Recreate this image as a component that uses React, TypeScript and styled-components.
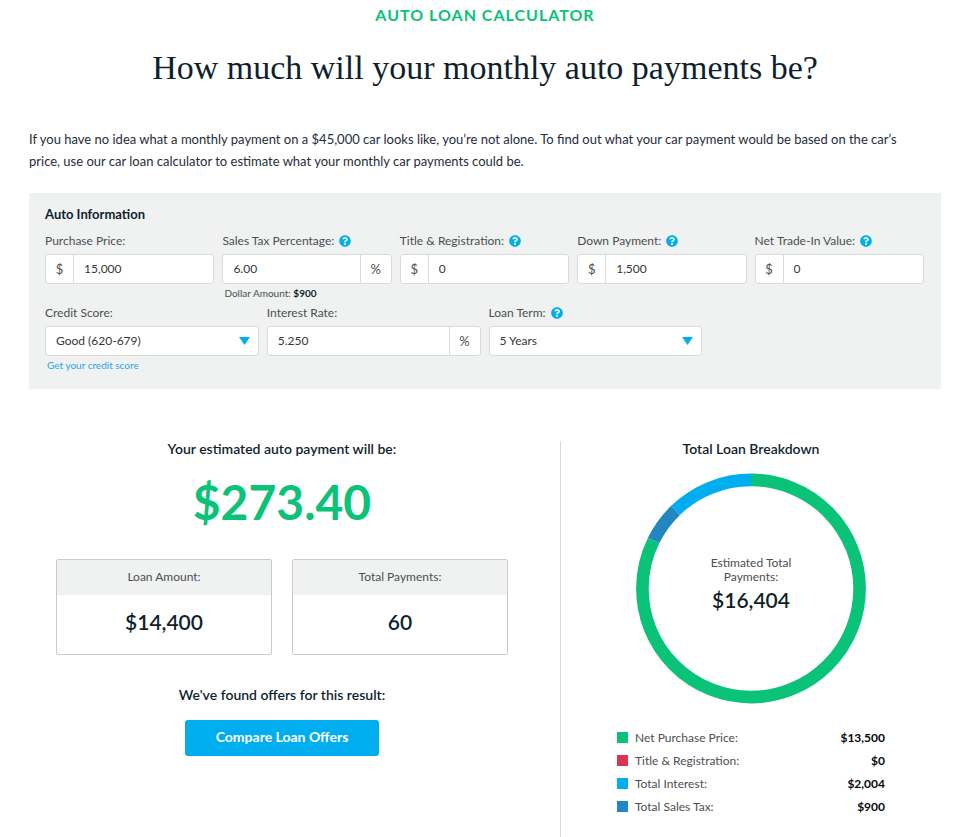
import React, { useId, useState } from "react";
import styled, { createGlobalStyle } from "styled-components";
import { FaQuestionCircle } from "react-icons/fa";

const GREEN = "#0ac278";
const BLUE = "#00aeef";
const STEEL = "#2087c0";
const RED = "#db3553";
const INK = "#0f1f2d";
const TEXT = "#4c4e50";
const LINE = "#d9dbdb";
const PANEL = "#f0f2f2";

const GlobalStyle = createGlobalStyle`
  *, *::before, *::after { box-sizing: border-box; }
  body {
    margin: 0;
    background: #fff;
    color: ${TEXT};
    font-family: Lato, "Open Sans", sans-serif;
    font-size: 12px;
    line-height: 16px;
  }
  h1, h2, h3, p, dl, dd, dt { margin: 0; }
  input, select, button { font-family: inherit; }
`;

const Page = styled.main`
  display: flex;
  flex-direction: column;
  min-height: 100vh;
  padding: 4px 30px 0 29px;
`;

const Eyebrow = styled.p`
  color: ${GREEN};
  font-size: 16px;
  font-weight: 700;
  line-height: 22px;
  letter-spacing: 1px;
  text-align: center;
  text-transform: uppercase;
`;

const Title = styled.h1`
  margin-top: 20px;
  color: ${INK};
  font-family: Georgia, "Liberation Serif", serif;
  font-size: 34px;
  font-weight: 400;
  line-height: 44px;
  text-align: center;
`;

const Intro = styled.p`
  margin-top: 38px;
  padding-right: 24px;
  color: #1f2d3a;
  font-size: 13px;
  line-height: 22px;
`;

const Panel = styled.form`
  margin-top: 21px;
  padding: 12px 17px 17px 16px;
  background: ${PANEL};
`;

const PanelTitle = styled.h2`
  margin-bottom: 5px;
  color: ${INK};
  font-size: 13px;
  font-weight: 700;
  line-height: 18px;
`;

const FieldRow = styled.div<{ $columns: number }>`
  display: grid;
  grid-template-columns: repeat(${(p) => p.$columns}, minmax(0, 1fr));
  gap: 8px;
`;

const FieldBlock = styled.div`
  display: flex;
  flex-direction: column;
  min-height: 72px;
  padding-top: 4px;
`;

const LabelLine = styled.div`
  display: flex;
  align-items: center;
  gap: 5px;
  height: 22px;
  padding-bottom: 5px;
  white-space: nowrap;
`;

const HelpButton = styled.button`
  display: flex;
  padding: 0;
  border: 0;
  background: none;
  color: ${BLUE};
  font-size: 12px;
  cursor: pointer;
`;

const InputGroup = styled.div`
  display: flex;
  height: 30px;
  overflow: hidden;
  border: 1px solid ${LINE};
  border-radius: 3px;
  background: #fff;
`;

const Affix = styled.span<{ $end?: boolean }>`
  flex: none;
  width: ${(p) => (p.$end ? 31 : 28)}px;
  border: 0 solid ${LINE};
  border-width: ${(p) => (p.$end ? "0 0 0 1px" : "0 1px 0 0")};
  font-size: 13px;
  line-height: 28px;
  text-align: center;
`;

const TextInput = styled.input`
  flex: 1;
  min-width: 0;
  padding: 0 10px 2px;
  border: 0;
  background: transparent;
  color: #333638;
  font-size: 12px;
`;

const SelectInput = styled.select`
  flex: 1;
  min-width: 0;
  padding: 0 30px 2px 10px;
  border: 0;
  appearance: none;
  background: transparent;
  color: #333638;
  font-size: 12px;
`;

const SelectWrap = styled(InputGroup)`
  display: grid;
  grid-template-columns: minmax(0, 1fr);
  & > * { grid-area: 1 / 1; }
`;

const Arrow = styled.svg`
  align-self: center;
  justify-self: end;
  margin-right: 8px;
  pointer-events: none;
`;

const Note = styled.p`
  padding: 2px 2px 0;
  font-size: 10px;
  line-height: 14px;
  strong { color: ${INK}; }
`;

const NoteLink = styled.a`
  padding: 2px 2px 0;
  color: #2ea3e6;
  font-size: 10px;
  line-height: 14px;
  text-decoration: none;
`;

const Results = styled.section`
  display: grid;
  grid-template-columns: minmax(0, 1fr) 381px;
  flex: 1;
  margin-top: 52px;
`;

const Estimate = styled.div`
  display: flex;
  flex-direction: column;
  align-items: center;
  padding: 0 52px 0 27px;
`;

const Subhead = styled.h2`
  color: ${INK};
  font-size: 14px;
  font-weight: 600;
  line-height: 16px;
  text-align: center;
`;

const Payment = styled.p`
  margin: 14px 0 27px;
  color: ${GREEN};
  font-size: 48px;
  font-weight: 700;
  line-height: 61px;
`;

const Cards = styled.div`
  display: grid;
  grid-template-columns: 1fr 1fr;
  gap: 20px;
  width: 100%;
  margin-bottom: 32px;
`;

const Card = styled.div`
  border: 1px solid #c9cbcb;
  border-radius: 2px;
  text-align: center;
`;

const CardLabel = styled.h3`
  padding-bottom: 2px;
  background: ${PANEL};
  font-size: 12px;
  font-weight: 400;
  line-height: 33px;
`;

const CardValue = styled.p`
  color: ${INK};
  font-size: 21px;
  font-weight: 600;
  line-height: 53px;
  padding-bottom: 6px;
`;

const OfferButton = styled.button`
  width: 194px;
  height: 36px;
  margin-top: 17px;
  padding: 0 0 4px;
  border: 0;
  border-radius: 3px;
  background: ${BLUE};
  color: #fff;
  font-size: 14px;
  font-weight: 700;
  cursor: pointer;
`;

const Breakdown = styled.div`
  display: flex;
  flex-direction: column;
  align-items: center;
  padding: 0 56px 18px;
  border-left: 1px solid ${LINE};
`;

const Chart = styled.div`
  display: grid;
  place-items: center;
  margin: 16px 0 22px;
  & > * { grid-area: 1 / 1; }
`;

const ChartCaption = styled.div`
  width: 100px;
  padding-bottom: 8px;
  font-size: 12px;
  line-height: 14px;
  text-align: center;
  strong {
    display: block;
    padding-top: 3px;
    color: ${INK};
    font-size: 21px;
    font-weight: 600;
    line-height: 26px;
  }
`;

const Legend = styled.dl`
  width: 100%;
`;

const LegendRow = styled.div`
  display: flex;
  justify-content: space-between;
  height: 23px;
  line-height: 23px;
  dd {
    color: #05080c;
    font-weight: 700;
  }
`;

const LegendName = styled.dt<{ $color: string }>`
  display: flex;
  align-items: center;
  gap: 7px;
  &::before {
    content: "";
    width: 11px;
    height: 11px;
    background: ${(p) => p.$color};
  }
`;

type FieldProps = {
  label: string;
  value: string;
  help?: boolean;
  prefix?: string;
  suffix?: string;
  options?: string[];
  children?: React.ReactNode;
};

function Field({ label, value, help, prefix, suffix, options, children }: FieldProps) {
  const id = useId();
  const [current, setCurrent] = useState(value);
  return (
    <FieldBlock>
      <LabelLine>
        <label htmlFor={id}>{label}</label>
        {help && (
          <HelpButton type="button" aria-label={`About ${label}`}>
            <FaQuestionCircle />
          </HelpButton>
        )}
      </LabelLine>
      {options ? (
        <SelectWrap>
          <SelectInput id={id} value={current} onChange={(e) => setCurrent(e.target.value)}>
            {options.map((o) => (
              <option key={o}>{o}</option>
            ))}
          </SelectInput>
          <Arrow width="11" height="8" viewBox="0 0 11 8" aria-hidden="true">
            <path d="M0 0h11L5.5 8z" fill={BLUE} />
          </Arrow>
        </SelectWrap>
      ) : (
        <InputGroup>
          {prefix && <Affix>{prefix}</Affix>}
          <TextInput id={id} value={current} onChange={(e) => setCurrent(e.target.value)} />
          {suffix && <Affix $end>{suffix}</Affix>}
        </InputGroup>
      )}
      {children}
    </FieldBlock>
  );
}

const legend = [
  { name: "Net Purchase Price:", value: 13500, color: GREEN },
  { name: "Title & Registration:", value: 0, color: RED },
  { name: "Total Interest:", value: 2004, color: BLUE },
  { name: "Total Sales Tax:", value: 900, color: STEEL },
];

const slices = [legend[0], legend[1], legend[3], legend[2]];

function Donut() {
  const total = slices.reduce((sum, s) => sum + s.value, 0);
  let start = 0;
  return (
    <svg width="230" height="231" viewBox="0 0 230 231" role="img" aria-label="Total loan breakdown">
      <g transform="rotate(-90 115 115.5)" fill="none" strokeWidth="12.6">
        {slices.map((s) => {
          const share = (s.value / total) * 100;
          const offset = -start;
          start += share;
          return share > 0 ? (
            <circle
              key={s.name}
              cx="115"
              cy="115.5"
              r="108.6"
              pathLength="100"
              stroke={s.color}
              strokeDasharray={`${share} ${100 - share}`}
              strokeDashoffset={offset}
            />
          ) : null;
        })}
      </g>
    </svg>
  );
}

export default function App() {
  return (
    <>
      <GlobalStyle />
      <Page>
        <Eyebrow>Auto Loan Calculator</Eyebrow>
        <Title>How much will your monthly auto payments be?</Title>
        <Intro>
          If you have no idea what a monthly payment on a $45,000 car looks like, you’re not alone. To find out
          what your car payment would be based on the car’s price, use our car loan calculator to estimate what
          your monthly car payments could be.
        </Intro>
        <Panel onSubmit={(e) => e.preventDefault()}>
          <PanelTitle>Auto Information</PanelTitle>
          <FieldRow $columns={5}>
            <Field label="Purchase Price:" prefix="$" value="15,000" />
            <Field label="Sales Tax Percentage:" suffix="%" value="6.00" help>
              <Note>
                Dollar Amount: <strong>$900</strong>
              </Note>
            </Field>
            <Field label="Title & Registration:" prefix="$" value="0" help />
            <Field label="Down Payment:" prefix="$" value="1,500" help />
            <Field label="Net Trade-In Value:" prefix="$" value="0" help />
          </FieldRow>
          <FieldRow $columns={4}>
            <Field
              label="Credit Score:"
              value="Good (620-679)"
              options={["Excellent (720+)", "Very Good (680-719)", "Good (620-679)", "Fair (580-619)"]}
            >
              <NoteLink href="#credit-score">Get your credit score</NoteLink>
            </Field>
            <Field label="Interest Rate:" suffix="%" value="5.250" />
            <Field
              label="Loan Term:"
              value="5 Years"
              options={["2 Years", "3 Years", "4 Years", "5 Years", "6 Years"]}
              help
            />
          </FieldRow>
        </Panel>
        <Results>
          <Estimate>
            <Subhead>Your estimated auto payment will be:</Subhead>
            <Payment>$273.40</Payment>
            <Cards>
              <Card>
                <CardLabel>Loan Amount:</CardLabel>
                <CardValue>$14,400</CardValue>
              </Card>
              <Card>
                <CardLabel>Total Payments:</CardLabel>
                <CardValue>60</CardValue>
              </Card>
            </Cards>
            <Subhead>We've found offers for this result:</Subhead>
            <OfferButton type="button">Compare Loan Offers</OfferButton>
          </Estimate>
          <Breakdown>
            <Subhead>Total Loan Breakdown</Subhead>
            <Chart>
              <Donut />
              <ChartCaption>
                Estimated Total Payments:
                <strong>$16,404</strong>
              </ChartCaption>
            </Chart>
            <Legend>
              {legend.map((row) => (
                <LegendRow key={row.name}>
                  <LegendName $color={row.color}>{row.name}</LegendName>
                  <dd>${row.value.toLocaleString("en-US")}</dd>
                </LegendRow>
              ))}
            </Legend>
          </Breakdown>
        </Results>
      </Page>
    </>
  );
}
